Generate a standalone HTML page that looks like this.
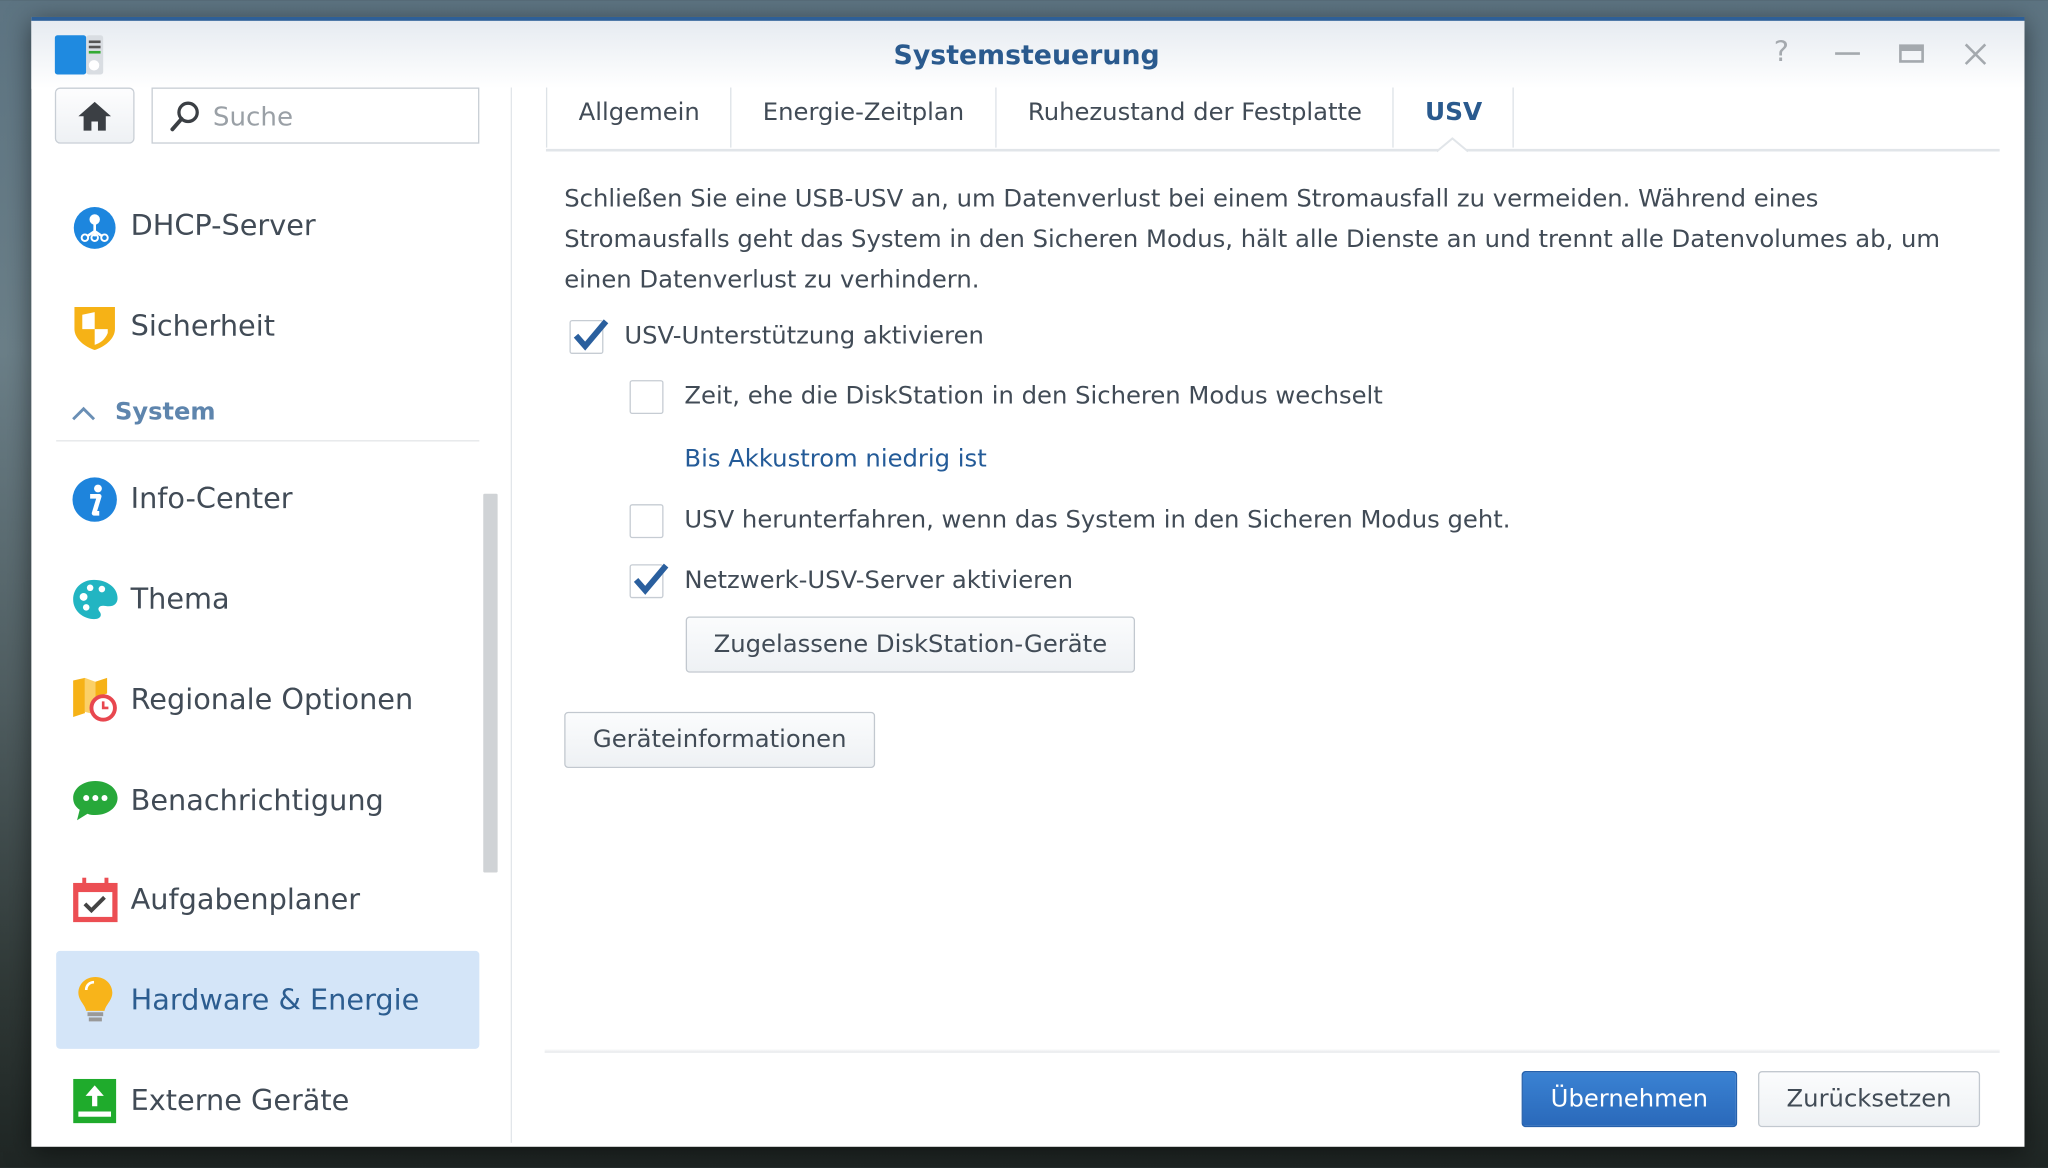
<!DOCTYPE html>
<html><head><meta charset="utf-8">
<style>
html,body{margin:0;padding:0;width:2048px;height:1168px;overflow:hidden;}
body{background:linear-gradient(180deg,#5d7482 0%,#6b7f88 30%,#4f5d60 60%,#2f3836 85%,#1f2624 100%);}
#s{position:absolute;left:0;top:0;width:1568px;height:894px;transform:scale(1.30612);transform-origin:0 0;font-family:"DejaVu Sans","Liberation Sans",sans-serif;color:#414b56;}
.a{position:absolute;}
.win{left:24px;top:13px;width:1526px;height:862px;background:#fff;border-top:3px solid #2d5f98;box-shadow:0 4px 18px rgba(0,0,0,.5);}
.tb{left:0;top:0;width:1526px;height:52px;background:linear-gradient(#e6ebf1,#fff);}
.it{font-size:22px;white-space:nowrap;}
.cb{width:26px;height:26px;border:1px solid #c6ccd3;background:#fff;box-sizing:border-box;border-radius:2px;}
.t{font-size:18.6px;white-space:nowrap;}
.btn{border:1px solid #c2c8cf;border-radius:3px;background:linear-gradient(#fbfcfd,#eef1f4);box-sizing:border-box;font-size:18.6px;text-align:center;}
.sep{width:1px;background:#dde2e7;}
</style></head><body>
<div id="s">
<div class="a win">
 <div class="a tb"></div>
</div>
<div class="a" style="left:42px;top:27px;width:24px;height:30px;background:#1f8ae0;border-radius:2px"></div>
<div class="a" style="left:66px;top:27px;width:13px;height:30px;background:#d9dde2;border-radius:2px"></div>
<div class="a" style="left:68px;top:46px;width:8px;height:8px;background:#fff;border-radius:50%"></div>
<div class="a" style="left:68px;top:31px;width:9px;height:2px;background:#555"></div>
<div class="a" style="left:68px;top:35px;width:9px;height:2px;background:#555"></div>
<div class="a" style="left:68px;top:39px;width:9px;height:2px;background:#3a3"></div>
<div class="a" style="left:0;top:30px;width:1572px;text-align:center;font-size:20.5px;font-weight:bold;color:#2a5a8e">Systemsteuerung</div>
<div class="a" style="left:1358px;top:28px;font-size:22px;color:#a4a9ae">?</div>
<div class="a" style="left:1405px;top:40px;width:19px;height:2px;background:#a4a9ae"></div>
<div class="a" style="left:1454px;top:34px;width:19px;height:14px;border:2px solid #a4a9ae;border-top-width:5px;box-sizing:border-box"></div>
<svg class="a" style="left:1503px;top:32px" width="19" height="19"><path d="M2 2L17 17M17 2L2 17" stroke="#a4a9ae" stroke-width="2"/></svg>
<div class="a" style="left:42px;top:67px;width:61px;height:43px;border:1px solid #c8ced5;border-radius:4px;background:linear-gradient(#fdfdfe,#eef1f4);box-sizing:border-box"></div>
<svg class="a" style="left:59px;top:76px" width="27" height="26"><path d="M13.5 2L1 13h4v11h6v-7h5v7h6V13h4z" fill="#3b3f44"/></svg>
<div class="a" style="left:116px;top:67px;width:251px;height:43px;border:1px solid #c8ced5;box-sizing:border-box;background:#fff"></div>
<svg class="a" style="left:128px;top:76px" width="28" height="26"><circle cx="16" cy="10" r="7" fill="none" stroke="#3b3f44" stroke-width="2.5"/><path d="M11 15L4 23" stroke="#3b3f44" stroke-width="3" stroke-linecap="round"/></svg>
<div class="a t" style="left:163px;top:77px;font-size:20px;color:#9aa0a6">Suche</div>
<div class="a sep" style="left:391px;top:67px;height:808px;background:#e2e6ea"></div>
<div class="a" style="left:370px;top:378px;width:11px;height:290px;background:#d0d3d6;border-radius:1px"></div>
<svg class="a" style="left:56px;top:158px" width="33" height="33"><circle cx="16.5" cy="16.5" r="16" fill="#1d86de"/><circle cx="16.5" cy="10" r="4" fill="#fff"/><path d="M16.5 13v6M16.5 19l-6 4M16.5 19l6 4M16.5 19v4" stroke="#fff" stroke-width="2"/><circle cx="9" cy="24" r="2.5" fill="none" stroke="#fff" stroke-width="1.5"/><circle cx="16.5" cy="24" r="2.5" fill="none" stroke="#fff" stroke-width="1.5"/><circle cx="24" cy="24" r="2.5" fill="none" stroke="#fff" stroke-width="1.5"/></svg>
<div class="a it" style="left:100px;top:161px">DHCP-Server</div>
<svg class="a" style="left:55px;top:232px" width="35" height="37"><path d="M2 3h31v17c0 8-9 14-15.5 16C11 34 2 28 2 20z" fill="#f6b216"/><path d="M17.5 7v13H8V9z" fill="#fff"/><path d="M17.5 20h10v3c-2 5-6 8-10 9z" fill="#fff"/></svg>
<div class="a it" style="left:100px;top:238px">Sicherheit</div>
<svg class="a" style="left:54px;top:308px" width="20" height="16"><path d="M2 13L10 5l8 8" fill="none" stroke="#6a8fb5" stroke-width="2.2"/></svg>
<div class="a" style="left:88px;top:305px;font-size:18.5px;font-weight:bold;color:#5e85ad">System</div>
<div class="a" style="left:43px;top:337px;width:324px;height:1px;background:#e3e6e9"></div>
<svg class="a" style="left:55px;top:365px" width="35" height="35"><circle cx="17.5" cy="17.5" r="17" fill="#1e84dc"/><circle cx="20" cy="9" r="3" fill="#fff"/><path d="M14 15h7l-4 13h4" fill="none" stroke="#fff" stroke-width="3.5" stroke-linejoin="round"/></svg>
<div class="a it" style="left:100px;top:370px">Info-Center</div>
<svg class="a" style="left:55px;top:443px" width="35" height="32"><path d="M17 1C7 1 1 8 1 16c0 9 8 15 16 15 6 0 6-4 4-6-2-3 1-5 5-4 6 1 9-2 9-6C35 7 27 1 17 1z" fill="#22b5c2"/><circle cx="9" cy="14" r="3" fill="#fff"/><circle cx="14" cy="7" r="2.5" fill="#fff"/><circle cx="23" cy="8" r="2.5" fill="#fff"/><circle cx="11" cy="22" r="2.5" fill="#fff"/></svg>
<div class="a it" style="left:100px;top:447px">Thema</div>
<svg class="a" style="left:54px;top:518px" width="38" height="36"><path d="M2 3l9-2v27l-9 3z" fill="#f6b216"/><path d="M11 1l8 3v25l-8-2z" fill="#fbd067"/><path d="M19 4l9-3v12l-9 3z" fill="#f6b216"/><circle cx="25" cy="24" r="9" fill="#fff" stroke="#e8474f" stroke-width="3"/><path d="M25 19v5h4" fill="none" stroke="#e8474f" stroke-width="2"/></svg>
<div class="a it" style="left:100px;top:524px">Regionale Optionen</div>
<svg class="a" style="left:55px;top:596px" width="36" height="34"><path d="M18 2C8 2 1 8 1 15c0 4 2 7 5 9l-2 8 8-5c2 1 4 1 6 1 10 0 17-6 17-13S28 2 18 2z" fill="#27a83a"/><circle cx="11" cy="15" r="2.3" fill="#fff"/><circle cx="18" cy="15" r="2.3" fill="#fff"/><circle cx="25" cy="15" r="2.3" fill="#fff"/></svg>
<div class="a it" style="left:100px;top:601px">Benachrichtigung</div>
<svg class="a" style="left:55px;top:671px" width="36" height="36"><rect x="1" y="5" width="34" height="30" fill="#ec4e53"/><rect x="5" y="12" width="26" height="19" fill="#fff"/><rect x="8" y="1" width="3" height="8" fill="#ec4e53"/><rect x="25" y="1" width="3" height="8" fill="#ec4e53"/><path d="M10 21l5 5 10-10" fill="none" stroke="#444" stroke-width="3"/></svg>
<div class="a it" style="left:100px;top:677px">Aufgabenplaner</div>
<div class="a" style="left:43px;top:728px;width:324px;height:75px;background:#d4e5f8;border-radius:3px"></div>
<svg class="a" style="left:58px;top:747px" width="30" height="38"><path d="M15 1C7 1 2 7 2 13c0 6 5 9 6 14h14c1-5 6-8 6-14C28 7 23 1 15 1z" fill="#f8b41a"/><path d="M8 11c0-4 3-6 6-6" fill="none" stroke="#fff" stroke-width="2"/><rect x="9" y="28" width="12" height="3" fill="#999"/><rect x="10" y="32" width="10" height="3" fill="#999"/></svg>
<div class="a it" style="left:100px;top:754px;color:#2c5d90">Hardware &amp; Energie</div>
<svg class="a" style="left:56px;top:826px" width="33" height="34"><rect x="0" y="0" width="33" height="34" fill="#1fab2c"/><path d="M16.5 5l-7 8h5v8h4v-8h5z" fill="#fff"/><rect x="4" y="25" width="25" height="4" fill="#fff"/></svg>
<div class="a it" style="left:100px;top:831px">Externe Geräte</div>
<div class="a sep" style="left:418px;top:67px;height:46px"></div>
<div class="a t" style="left:443px;top:76px">Allgemein</div>
<div class="a sep" style="left:559px;top:67px;height:46px"></div>
<div class="a t" style="left:584px;top:76px">Energie-Zeitplan</div>
<div class="a sep" style="left:762px;top:67px;height:46px"></div>
<div class="a t" style="left:787px;top:76px">Ruhezustand der Festplatte</div>
<div class="a sep" style="left:1066px;top:67px;height:46px"></div>
<div class="a t" style="left:1091px;top:75px;font-weight:bold;color:#2a5a8e;font-size:19px">USV</div>
<div class="a sep" style="left:1158px;top:67px;height:46px"></div>
<div class="a" style="left:418px;top:114px;width:1113px;height:2px;background:#e1e5e9"></div>
<svg class="a" style="left:1100px;top:105px" width="24" height="12"><path d="M0 11L12 1l12 10" fill="#fff" stroke="#e1e5e9" stroke-width="1.5"/></svg>
<div class="a t" style="left:432px;top:137px;line-height:31px">Schließen Sie eine USB-USV an, um Datenverlust bei einem Stromausfall zu vermeiden. Während eines<br>Stromausfalls geht das System in den Sicheren Modus, hält alle Dienste an und trennt alle Datenvolumes ab, um<br>einen Datenverlust zu verhindern.</div>
<div class="a cb" style="left:436px;top:245px"></div>
<svg class="a" style="left:437px;top:242px" width="30" height="30"><path d="M4 15l7 8L27 4" fill="none" stroke="#2a5f9e" stroke-width="4.5"/></svg>
<div class="a t" style="left:478px;top:247px">USV-Unterstützung aktivieren</div>
<div class="a cb" style="left:482px;top:291px"></div>
<div class="a t" style="left:524px;top:293px">Zeit, ehe die DiskStation in den Sicheren Modus wechselt</div>
<div class="a t" style="left:524px;top:341px;color:#245b98">Bis Akkustrom niedrig ist</div>
<div class="a cb" style="left:482px;top:386px"></div>
<div class="a t" style="left:524px;top:388px">USV herunterfahren, wenn das System in den Sicheren Modus geht.</div>
<div class="a cb" style="left:482px;top:432px"></div>
<svg class="a" style="left:483px;top:429px" width="30" height="30"><path d="M4 15l7 8L27 4" fill="none" stroke="#2a5f9e" stroke-width="4.5"/></svg>
<div class="a t" style="left:524px;top:434px">Netzwerk-USV-Server aktivieren</div>
<div class="a btn" style="left:525px;top:472px;width:344px;height:43px;line-height:41px">Zugelassene DiskStation-Geräte</div>
<div class="a btn" style="left:432px;top:545px;width:238px;height:43px;line-height:41px">Geräteinformationen</div>
<div class="a" style="left:417px;top:803px;width:1114px;height:3px;background:linear-gradient(#fff,#e4e7ea)"></div>
<div class="a btn" style="left:1165px;top:820px;width:165px;height:43px;line-height:41px;background:linear-gradient(#3a82d3,#2a69ba);border-color:#2560ab;color:#fff">Übernehmen</div>
<div class="a btn" style="left:1346px;top:820px;width:170px;height:43px;line-height:41px">Zurücksetzen</div>
</div>
</body></html>
